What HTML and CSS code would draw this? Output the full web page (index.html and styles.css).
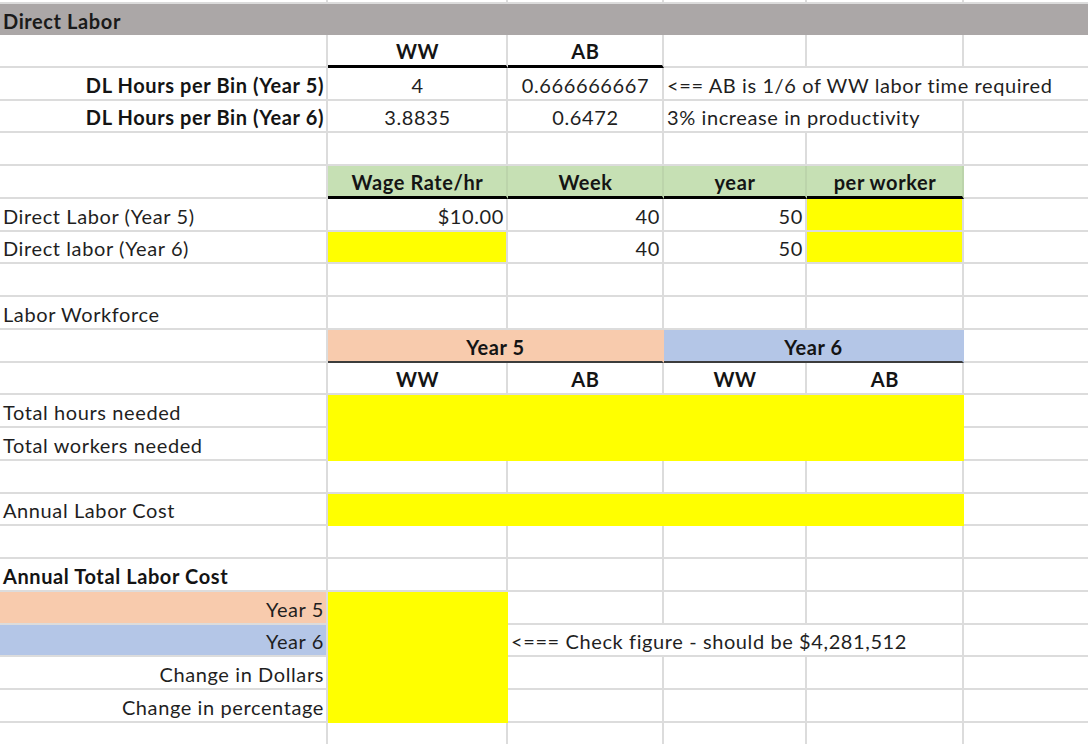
FILE: index.html
```html
<!DOCTYPE html>
<html lang="en">
<head>
<meta charset="utf-8">
<title>Direct Labor</title>
<link rel="stylesheet" href="styles.css">
</head>
<body>
<div class="sheet">
  <!-- partial top row -->
  <div class="cell"></div><div class="cell"></div><div class="cell"></div><div class="cell"></div><div class="cell"></div><div class="cell last"></div>

  <!-- Direct Labor band -->
  <div class="cell band s6 b">Direct Labor</div>

  <div class="cell"></div>
  <div class="cell b ctr thick">WW</div>
  <div class="cell b ctr thick">AB</div>
  <div class="cell"></div><div class="cell"></div><div class="cell last"></div>

  <div class="cell b r">DL Hours per Bin (Year 5)</div>
  <div class="cell ctr">4</div>
  <div class="cell ctr">0.666666667</div>
  <div class="cell s3 last note">&lt;== AB is 1/6 of WW labor time required</div>

  <div class="cell b r">DL Hours per Bin (Year 6)</div>
  <div class="cell ctr">3.8835</div>
  <div class="cell ctr">0.6472</div>
  <div class="cell s2 note">3% increase in productivity</div>
  <div class="cell last"></div>

  <div class="cell"></div><div class="cell"></div><div class="cell"></div><div class="cell"></div><div class="cell"></div><div class="cell last"></div>

  <div class="cell"></div>
  <div class="cell b ctr green thick">Wage Rate/hr</div>
  <div class="cell b ctr green thick">Week</div>
  <div class="cell b ctr green thick">year</div>
  <div class="cell b ctr green thick">per worker</div>
  <div class="cell last"></div>

  <div class="cell">Direct Labor (Year 5)</div>
  <div class="cell r">$10.00</div>
  <div class="cell r">40</div>
  <div class="cell r">50</div>
  <div class="cell yellow"></div>
  <div class="cell last"></div>

  <div class="cell">Direct labor (Year 6)</div>
  <div class="cell yellow"></div>
  <div class="cell r">40</div>
  <div class="cell r">50</div>
  <div class="cell yellow"></div>
  <div class="cell last"></div>

  <div class="cell"></div><div class="cell"></div><div class="cell"></div><div class="cell"></div><div class="cell"></div><div class="cell last"></div>

  <div class="cell">Labor Workforce</div>
  <div class="cell"></div><div class="cell"></div><div class="cell"></div><div class="cell"></div><div class="cell last"></div>

  <div class="cell"></div>
  <div class="cell s2 b ctr peach under">Year 5</div>
  <div class="cell s2 b ctr blue under">Year 6</div>
  <div class="cell last"></div>

  <div class="cell"></div>
  <div class="cell b ctr">WW</div>
  <div class="cell b ctr">AB</div>
  <div class="cell b ctr">WW</div>
  <div class="cell b ctr">AB</div>
  <div class="cell last"></div>

  <div class="cell">Total hours needed</div>
  <div class="cell s4 rs2 fill"></div>
  <div class="cell last"></div>
  <div class="cell">Total workers needed</div>
  <div class="cell last"></div>

  <div class="cell"></div><div class="cell"></div><div class="cell"></div><div class="cell"></div><div class="cell"></div><div class="cell last"></div>

  <div class="cell">Annual Labor Cost</div>
  <div class="cell s4 fill"></div>
  <div class="cell last"></div>

  <div class="cell"></div><div class="cell"></div><div class="cell"></div><div class="cell"></div><div class="cell"></div><div class="cell last"></div>

  <div class="cell b">Annual Total Labor Cost</div>
  <div class="cell"></div><div class="cell"></div><div class="cell"></div><div class="cell"></div><div class="cell last"></div>

  <div class="cell r peach">Year 5</div>
  <div class="cell rs4 fill"></div>
  <div class="cell"></div><div class="cell"></div><div class="cell"></div><div class="cell last"></div>

  <div class="cell r blue">Year 6</div>
  <div class="cell s3 note">&lt;=== Check figure - should be $4,281,512</div>
  <div class="cell last"></div>

  <div class="cell r">Change in Dollars</div>
  <div class="cell"></div><div class="cell"></div><div class="cell"></div><div class="cell last"></div>

  <div class="cell r">Change in percentage</div>
  <div class="cell"></div><div class="cell"></div><div class="cell"></div><div class="cell last"></div>

  <!-- partial bottom row -->
  <div class="cell end"></div><div class="cell end"></div><div class="cell end"></div><div class="cell end"></div><div class="cell end"></div><div class="cell end last"></div>
</div>
</body>
</html>
```
FILE: styles.css
```css
* { box-sizing: border-box; }

html, body {
  margin: 0;
  padding: 0;
  background: #ffffff;
}

body {
  width: 1088px;
  height: 744px;
  overflow: hidden;
  font-family: "Lato", "Liberation Sans", sans-serif;
  font-size: 20px;
  letter-spacing: 0.6px;
  color: #1f1f1f;
}

.sheet {
  display: grid;
  grid-template-columns: 328px 180px 156px 143px 157px 124px;
  grid-template-rows: 4px 31px repeat(21, 32.75px) 1fr;
  height: 744px;
}

.cell {
  display: flex;
  align-items: flex-end;
  justify-content: flex-start;
  padding: 0 2px 2px 3px;
  line-height: 24px;
  white-space: nowrap;
  overflow: visible;
  border-right: 2px solid #dcdcdc;
  border-bottom: 2px solid #dcdcdc;
  min-width: 0;
}

.last { border-right: none; }
.end { border-bottom: none; }

.b { font-weight: 700; color: #141414; }
.r { justify-content: flex-end; }
.ctr { justify-content: center; }
.note { padding-left: 3px; }

.s2 { grid-column: span 2; }
.s3 { grid-column: span 3; }
.s4 { grid-column: span 4; }
.s6 { grid-column: span 6; }
.rs2 { grid-row: span 2; }
.rs4 { grid-row: span 4; }

.band {
  background: #aba7a7;
  border: none;
  padding-bottom: 2px;
  color: #1a1a1a;
}

.thick { border-bottom: 3px solid #000000; }

.green {
  background: #c6e0b4;
  border-right-color: #bcd4ab;
}

.peach { background: #f8cbad; }
.blue { background: #b4c6e7; }

.under {
  border-right-color: transparent;
  border-bottom: 2px solid #3c3c3c;
}

.yellow { background: #ffff00; }

.fill {
  background: #ffff00;
  border-right-color: transparent;
  border-bottom-color: transparent;
}
```
